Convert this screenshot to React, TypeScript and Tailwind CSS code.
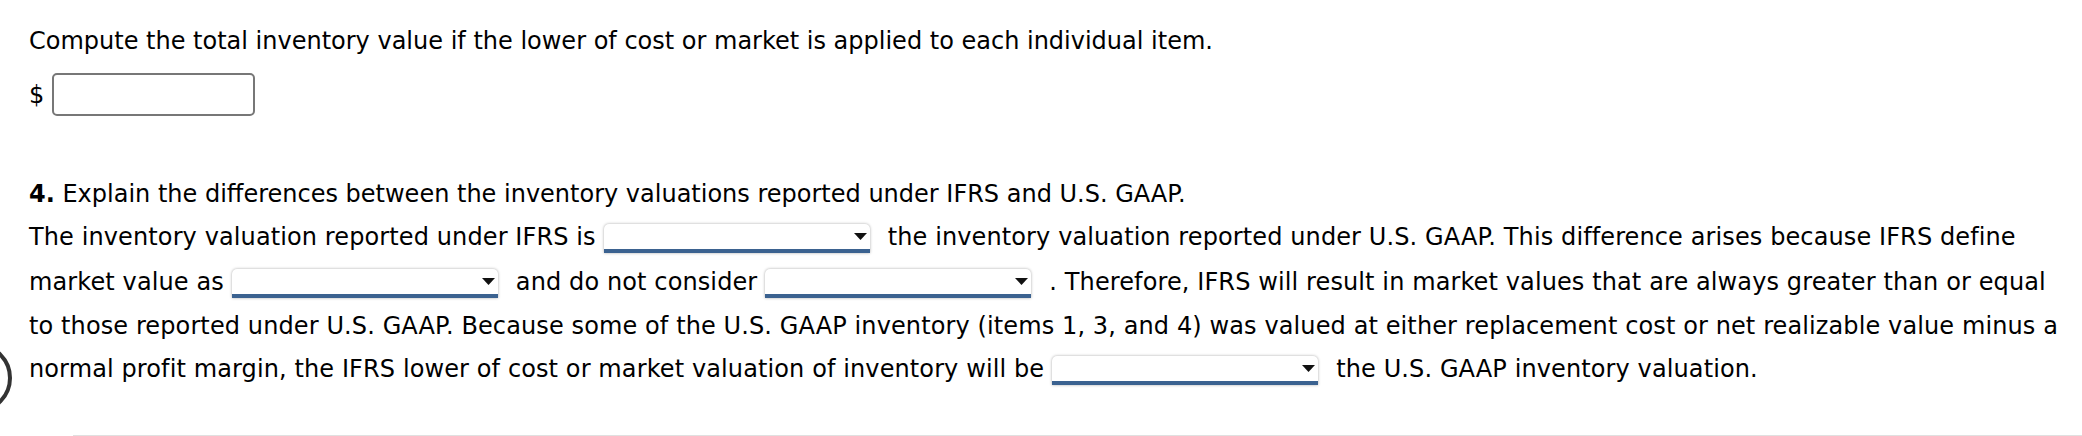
import React from 'react';

function Dropdown() {
  return (
    <span className="ml-[8px] mr-[18px] inline-flex h-[29px] w-[266px] items-center justify-end rounded-t-[5px] border-b-[4px] border-[#3b6290] bg-white pr-[3px] align-middle shadow-[0_0_3px_rgba(0,0,0,0.35)]">
      <svg width="13" height="8" viewBox="0 0 13 8" className="mt-[1px]">
        <polygon points="0,0 13,0 6.5,7" fill="#111" />
      </svg>
    </span>
  );
}

export default function App() {
  return (
    <div className="relative h-[436px] w-[2082px] overflow-hidden bg-white font-['DejaVu_Sans',sans-serif] text-[24px] text-black">
      {/* partially hidden circle on the left edge */}
      <div className="absolute left-[-62px] top-[343px] h-[70px] w-[74px] rounded-full border-[4px] border-[#333]"></div>

      <div className="pl-[29px] pt-[27px]">
        <p className="leading-[28px]">
          Compute the total inventory value if the lower of cost or market is applied to each individual item.
        </p>

        <div className="mt-[18px] flex items-center">
          <span className="w-[23px]">$</span>
          <div className="h-[43px] w-[203px] rounded-[5px] border-[2px] border-[#777] bg-white"></div>
        </div>

        <p className="mt-[64px] leading-[28px]">
          <b>4.</b> Explain the differences between the inventory valuations reported under IFRS and U.S. GAAP.
        </p>

        <div className="mt-[8px] whitespace-nowrap leading-[42px] tracking-[0.11px]">
          The inventory valuation reported under IFRS is<Dropdown />the inventory valuation reported under U.S. GAAP. This difference arises because IFRS define
        </div>
        <div className="mt-[3px] whitespace-nowrap leading-[42px] tracking-[0.11px]">
          market value as<Dropdown />and do not consider<Dropdown />. Therefore, IFRS will result in market values that are always greater than or equal
        </div>
        <div className="mt-[2px] whitespace-nowrap leading-[42px] tracking-[0.11px]">
          to those reported under U.S. GAAP. Because some of the U.S. GAAP inventory (items 1, 3, and 4) was valued at either replacement cost or net realizable value minus a
        </div>
        <div className="mt-[1px] whitespace-nowrap leading-[42px] tracking-[0.11px]">
          normal profit margin, the IFRS lower of cost or market valuation of inventory will be<Dropdown />the U.S. GAAP inventory valuation.
        </div>
      </div>

      <div className="absolute bottom-0 left-[73px] right-0 border-t border-[#e0e0e0]"></div>
    </div>
  );
}
